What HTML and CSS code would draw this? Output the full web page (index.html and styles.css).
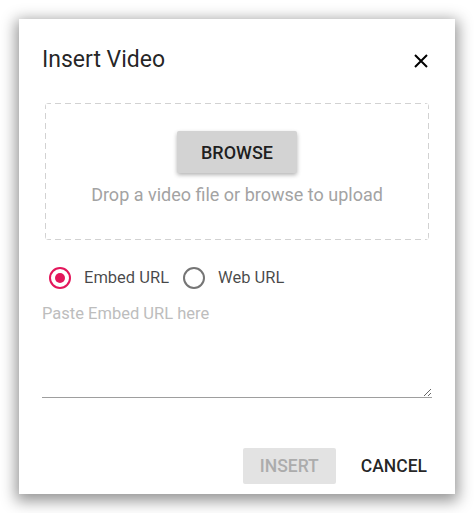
FILE: index.html
```html
<!DOCTYPE html>
<html lang="en">
<head>
    <meta charset="UTF-8">
    <meta name="viewport" content="width=device-width, initial-scale=1.0">
    <title>Insert Video</title>
    <link rel="stylesheet" href="styles.css">
</head>
<body>

    <div class="dialog">

        <div class="dlg-header">
            <span class="dlg-title">Insert Video</span>
            <button class="dlg-close" title="Close">
                <svg width="14" height="14" viewBox="0 0 14 14">
                    <path d="M1 1 L13 13 M13 1 L1 13" stroke="#000" stroke-width="2" fill="none"/>
                </svg>
            </button>
        </div>

        <div class="dlg-content">
            <div class="drop-area">
                <button class="browse-btn">BROWSE</button>
                <span class="drop-text">Drop a video file or browse to upload</span>
            </div>

            <div class="radio-row">
                <label class="radio checked">
                    <span class="radio-icon"></span>
                    <span class="radio-label">Embed URL</span>
                </label>
                <label class="radio">
                    <span class="radio-icon"></span>
                    <span class="radio-label">Web URL</span>
                </label>
            </div>

            <textarea class="url-input" placeholder="Paste Embed URL here"></textarea>
        </div>

        <div class="dlg-footer">
            <button class="btn btn-insert" disabled>INSERT</button>
            <button class="btn btn-cancel">CANCEL</button>
        </div>

    </div>

</body>
</html>
```

FILE: styles.css
```css
body, div, button, textarea {
  margin: 0;
  padding: 0;
}

body {
  background: #fff;
  padding: 19px;
  font-family: Roboto, "Liberation Sans", sans-serif;
}

.dialog {
  width: 436px;
  height: 475px;
  background: #fff;
  box-shadow: 0 4px 14px 3px rgba(0, 0, 0, 0.42);
  display: flex;
  flex-direction: column;
}

/* header */
.dlg-header {
  display: flex;
  align-items: center;
  justify-content: space-between;
  padding: 26px 27px 0 23px;
  height: 30px;
}

.dlg-title {
  font-size: 23px;
  line-height: 30px;
  color: rgba(0, 0, 0, 0.87);
}

.dlg-close {
  border: none;
  background: none;
  width: 14px;
  height: 14px;
  display: flex;
  margin-top: 1px;
}

/* content */
.dlg-content {
  padding: 0 23px;
  display: flex;
  flex-direction: column;
}

.drop-area {
  margin: 28px 3px 0;
  height: 137px;
  box-sizing: border-box;
  padding-top: 28px;
  display: flex;
  flex-direction: column;
  align-items: center;
  background:
    repeating-linear-gradient(90deg, #d2d2d2 0 6px, transparent 6px 10px) top left / 100% 1px no-repeat,
    repeating-linear-gradient(90deg, #d2d2d2 0 6px, transparent 6px 10px) bottom left / 100% 1px no-repeat,
    repeating-linear-gradient(180deg, #d2d2d2 0 6px, transparent 6px 10px) top left / 1px 100% no-repeat,
    repeating-linear-gradient(180deg, #d2d2d2 0 6px, transparent 6px 10px) top right / 1px 100% no-repeat;
  border-radius: 4px;
}

.browse-btn {
  width: 120px;
  height: 42px;
  border: none;
  border-radius: 2px;
  background: #d3d3d3;
  box-shadow: 0 2px 4px rgba(0, 0, 0, 0.3);
  font-family: inherit;
  font-size: 18px;
  font-weight: 500;
  color: rgba(0, 0, 0, 0.87);
}

.drop-text {
  margin-top: 10px;
  font-size: 18px;
  line-height: 24px;
  color: #a3a3a3;
}

/* radios */
.radio-row {
  margin-top: 26px;
  padding-left: 7px;
  display: flex;
  gap: 14px;
  height: 24px;
}

.radio {
  display: flex;
  align-items: center;
  gap: 13px;
}

.radio-icon {
  width: 22px;
  height: 22px;
  box-sizing: border-box;
  border: 2px solid #757575;
  border-radius: 50%;
  display: flex;
  align-items: center;
  justify-content: center;
}

.radio.checked .radio-icon {
  border-color: #e3165b;
}

.radio.checked .radio-icon::after {
  content: "";
  width: 10px;
  height: 10px;
  border-radius: 50%;
  background: #e3165b;
}

.radio-label {
  font-size: 16.5px;
  line-height: 24px;
  color: rgba(0, 0, 0, 0.72);
}

/* url box */
.url-input {
  margin-top: 9px;
  height: 99px;
  box-sizing: border-box;
  border: none;
  border-bottom: 1px solid #9e9e9e;
  padding: 4px 0 0;
  outline: none;
  resize: vertical;
  font-family: inherit;
  font-size: 16.5px;
  line-height: 22px;
  color: rgba(0, 0, 0, 0.87);
}

.url-input::placeholder {
  color: #bdbdbd;
}

/* footer */
.dlg-footer {
  margin-top: auto;
  padding: 0 20px 10px;
  display: flex;
  justify-content: flex-end;
  gap: 17px;
}

.btn {
  height: 36px;
  border: none;
  border-radius: 2px;
  font-family: inherit;
  font-size: 17.5px;
  font-weight: 500;
  background: none;
}

.btn-insert {
  width: 93px;
  background: #e3e3e3;
  color: #acacac;
}

.btn-cancel {
  padding: 0 8px;
  color: rgba(0, 0, 0, 0.87);
}
```
